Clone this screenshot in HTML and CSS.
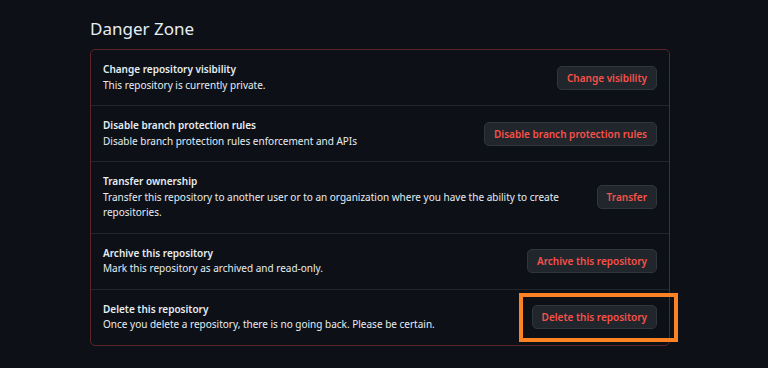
FILE: index.html
```html
<!DOCTYPE html>
<html lang="en">
<head>
  <meta charset="UTF-8" />
  <title>Danger Zone</title>
  <link rel="stylesheet" href="styles.css">
</head>
<body>
  <main class="settings">
    <h2 class="zone-title">Danger Zone</h2>
    <div class="danger-box">
      <div class="danger-row">
        <div class="info">
          <strong>Change repository visibility</strong>
          <p>This repository is currently private.</p>
        </div>
        <button class="btn-danger">Change visibility</button>
      </div>
      <div class="danger-row">
        <div class="info">
          <strong>Disable branch protection rules</strong>
          <p>Disable branch protection rules enforcement and APIs</p>
        </div>
        <button class="btn-danger">Disable branch protection rules</button>
      </div>
      <div class="danger-row">
        <div class="info">
          <strong>Transfer ownership</strong>
          <p>Transfer this repository to another user or to an organization where you have the ability to create repositories.</p>
        </div>
        <button class="btn-danger">Transfer</button>
      </div>
      <div class="danger-row">
        <div class="info">
          <strong>Archive this repository</strong>
          <p>Mark this repository as archived and read-only.</p>
        </div>
        <button class="btn-danger">Archive this repository</button>
      </div>
      <div class="danger-row">
        <div class="info">
          <strong>Delete this repository</strong>
          <p>Once you delete a repository, there is no going back. Please be certain.</p>
        </div>
        <div class="highlight-wrap">
          <button class="btn-danger">Delete this repository</button>
          <span class="highlight"></span>
        </div>
      </div>
    </div>
  </main>
</body>
</html>
```

FILE: styles.css
```css
html, body {
  margin: 0;
  padding: 0;
  background: #0d1117;
  color: #e6edf3;
  font-family: 'Noto Sans', 'Liberation Sans', sans-serif;
  font-size: 10px;
  line-height: 15.5px;
}
.settings {
  width: 580px;
  margin-left: 90px;
  padding-top: 17px;
}
.zone-title {
  font-size: 17px;
  font-weight: 400;
  line-height: 24px;
  margin: 0 0 8px;
}
.danger-box {
  border: 1px solid #5e2529;
  border-radius: 5px;
}
.danger-row {
  display: flex;
  align-items: center;
  gap: 12px;
  padding: 12px;
  border-top: 1px solid #21262d;
}
.danger-row:first-child {
  border-top: none;
}
.info {
  flex: 1;
}
.info strong {
  display: block;
  font-weight: 600;
}
.info p {
  margin: 0;
}
.btn-danger {
  flex-shrink: 0;
  height: 24px;
  padding: 0 9px;
  background: #21262d;
  color: #f85149;
  border: 1px solid #30363d;
  border-radius: 5px;
  font-family: inherit;
  font-size: 10px;
  font-weight: 600;
}
.highlight-wrap {
  position: relative;
}
.highlight {
  position: absolute;
  left: -13px;
  right: -21px;
  top: -12px;
  bottom: -13px;
  border: 4px solid #fd8224;
}
```
